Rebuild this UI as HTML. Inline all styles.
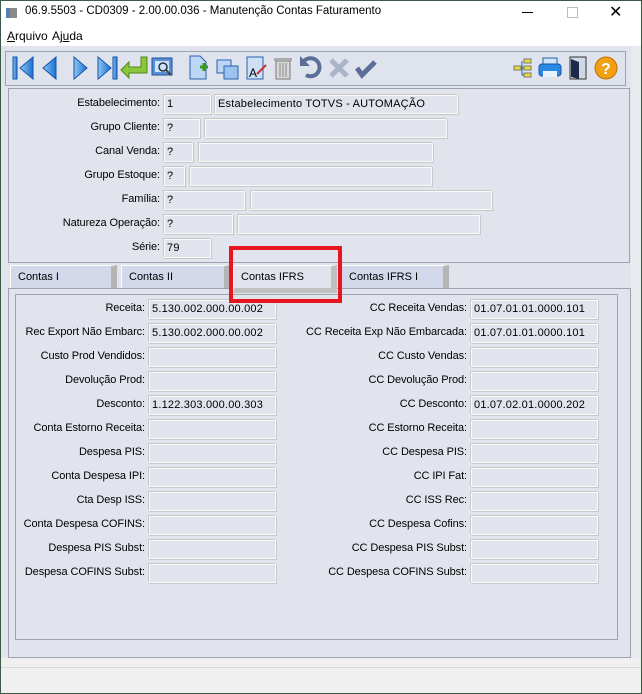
<!DOCTYPE html>
<html><head><meta charset="utf-8"><style>
*{margin:0;padding:0;box-sizing:border-box}
body{width:642px;height:694px;overflow:hidden;background:#f0f0f0;font-family:"Liberation Sans",sans-serif;font-size:11px;color:#000;position:relative}
.a{position:absolute}
.win{left:0;top:0;width:642px;height:694px;border:1px solid #3c5a48}
.lbl{position:absolute;text-align:right;white-space:nowrap;font-size:11px;letter-spacing:-0.1px}
.inp{position:absolute;height:20px;border:1px solid #c8c8c8;border-right-color:#fafafa;border-bottom-color:#fafafa;box-shadow:inset 1px 1px 0 #fafafa,1px 1px 0 #c8c8c8;background:#e1e4ec;padding:3px 3px;font-size:11px;white-space:nowrap;overflow:hidden;letter-spacing:0.2px}
.tab{position:absolute;top:265px;height:24px;background:#d3d9ea;border-top:1px solid #fff;border-left:1px solid #fff;border-right:6px solid #b5b5b5;padding:5px 7px;font-size:11px}
</style></head><body>
<div class="a win"></div>
<div class="a" style="left:1px;top:1px;width:640px;height:24px;background:#fff"></div>
<div class="a" style="left:6px;top:8px;width:11px;height:10px;background:#8a8a8a;border-left:4px solid #5a7fb0"></div>
<div class="a" style="left:25px;top:5px;font-size:11.5px">06.9.5503 - CD0309 - 2.00.00.036 - Manutenção Contas Faturamento</div>
<div class="a" style="left:522px;top:12px;width:11px;height:1px;background:#000"></div>
<div class="a" style="left:567px;top:7px;width:11px;height:11px;border:1px solid #bbb"></div>
<div class="a" style="left:609px;top:2px;font-size:16px">✕</div>
<div class="a" style="left:1px;top:25px;width:640px;height:21px;background:#fff"></div>
<div class="a" style="left:7px;top:29px;font-size:12px"><u>A</u>rquivo</div>
<div class="a" style="left:52px;top:29px;font-size:12px">Aj<u>u</u>da</div>
<div class="a" style="left:1px;top:46px;width:630px;height:612px;background:#e1e4ec"></div>
<div class="a" style="left:631px;top:46px;width:10px;height:612px;background:#e8eaf0"></div>
<div class="a" style="left:5px;top:51px;width:621px;height:35px;border:1px solid #9ba2b0;background:#dfe3ed"></div>
<svg class="a" style="left:0;top:52px" width="640" height="34">
<defs><linearGradient id="b" x1="0" x2="1"><stop offset="0" stop-color="#8ec8f6"/><stop offset="1" stop-color="#1a6fd0"/></linearGradient></defs>
<g fill="url(#b)" stroke="#1456a8" stroke-width="1">
<rect x="13" y="5" width="4" height="22"/><path d="M33 5 L20 16 L33 27Z"/>
<path d="M56 5 L43 16 L56 27Z"/>
<path d="M74 5 L87 16 L74 27Z"/>
<path d="M98 5 L111 16 L98 27Z"/><rect x="113" y="5" width="4" height="22"/>
</g>
<path d="M141 5 h6 v16 h-18 v5 l-8 -8 l8 -8 v5 h12z" fill="#8cc63c" stroke="#4d8a1a"/>
<rect x="152" y="6" width="20" height="17" fill="#5a8fd6" stroke="#1d4f9a"/><rect x="155" y="9" width="14" height="11" fill="#cfe4fa"/><circle cx="163" cy="15" r="4" fill="none" stroke="#234" stroke-width="1.5"/><path d="M166 18l5 5" stroke="#444" stroke-width="2"/>
<path d="M190 4h10l6 6v17h-16z" fill="#bcd6f4" stroke="#2a60b0"/><path d="M200 15h8M204 11v8" stroke="#3a9a20" stroke-width="3"/>
<rect x="217" y="8" width="14" height="13" fill="#bcd6f4" stroke="#2a60b0"/><rect x="224" y="14" width="14" height="13" fill="#9cc2ee" stroke="#2a60b0"/>
<rect x="247" y="5" width="16" height="22" fill="#cde0f6" stroke="#2a60b0"/><text x="249" y="25" font-family="Liberation Sans" font-size="12" fill="#000">A</text><path d="M257 22l9-9" stroke="#d03030" stroke-width="2"/>
<rect x="276" y="9" width="14" height="18" fill="#d8d8d8" stroke="#777"/><rect x="274" y="6" width="18" height="3" fill="#aaa"/><path d="M280 11v14M283 11v14M286 11v14" stroke="#888"/>
<path d="M304 9 a9 9 0 1 1 2 14" fill="none" stroke="#5a6e98" stroke-width="4"/><path d="M300 4v10h10z" fill="#5a6e98"/>
<path d="M331 8l16 16M347 8l-16 16" stroke="#aab4c6" stroke-width="5"/>
<path d="M357 16l5 7 13-13" fill="none" stroke="#5a6e98" stroke-width="5"/>
<g fill="#e8e030" stroke="#777"><rect x="524" y="7" width="7" height="4"/><rect x="524" y="14" width="7" height="4"/><rect x="524" y="21" width="7" height="4"/><rect x="514" y="14" width="7" height="4"/></g>
<path d="M521 16h3M522 9v14h2" stroke="#2a60b0" fill="none"/>
<rect x="543" y="6" width="14" height="7" fill="#cfe4fa" stroke="#2a60b0"/><rect x="539" y="12" width="22" height="12" rx="3" fill="#2a88e0" stroke="#1456a8"/><rect x="543" y="19" width="14" height="6" fill="#e8f2fc"/>
<rect x="570" y="5" width="16" height="22" fill="#d0d8e4" stroke="#333"/><path d="M571 7l8 3v17l-8-2z" fill="#1a2a48"/>
<circle cx="606" cy="16" r="11" fill="#f0a010" stroke="#c07000"/><text x="601" y="22" font-family="Liberation Sans" font-weight="bold" font-size="16" fill="#fff">?</text>
</svg>
<div class="a" style="left:8px;top:88px;width:622px;height:175px;border:1px solid #9ba2b0"></div>
<div class="lbl" style="right:482px;top:97px">Estabelecimento:</div>
<div class="inp" style="left:163px;top:94px;width:48px">1</div>
<div class="inp" style="left:214px;top:94px;width:244px">Estabelecimento TOTVS - AUTOMAÇÃO</div>
<div class="lbl" style="right:482px;top:121px">Grupo Cliente:</div>
<div class="inp" style="left:163px;top:118px;width:37px">?</div>
<div class="inp" style="left:204px;top:118px;width:243px"></div>
<div class="lbl" style="right:482px;top:145px">Canal Venda:</div>
<div class="inp" style="left:163px;top:142px;width:30px">?</div>
<div class="inp" style="left:198px;top:142px;width:235px"></div>
<div class="lbl" style="right:482px;top:169px">Grupo Estoque:</div>
<div class="inp" style="left:163px;top:166px;width:22px">?</div>
<div class="inp" style="left:189px;top:166px;width:243px"></div>
<div class="lbl" style="right:482px;top:193px">Família:</div>
<div class="inp" style="left:163px;top:190px;width:82px">?</div>
<div class="inp" style="left:250px;top:190px;width:242px"></div>
<div class="lbl" style="right:482px;top:217px">Natureza Operação:</div>
<div class="inp" style="left:163px;top:214px;width:70px">?</div>
<div class="inp" style="left:237px;top:214px;width:243px"></div>
<div class="lbl" style="right:482px;top:241px">Série:</div>
<div class="inp" style="left:163px;top:238px;width:48px">79</div>
<div class="tab" style="left:10px;width:107px">Contas I</div>
<div class="tab" style="left:121px;width:109px">Contas II</div>
<div class="tab" style="left:233px;width:104px;height:28px;background:#e1e4ec;border-right-color:#c0c0c0;border-bottom:5px solid #c0c0c0;padding-top:5px">Contas IFRS</div>
<div class="tab" style="left:341px;width:108px">Contas IFRS I</div>
<div class="a" style="left:8px;top:288px;width:623px;height:370px;border:1px solid #9ba2b0;border-top:none"></div>
<div class="a" style="left:8px;top:288px;width:225px;height:1px;background:#9ba2b0"></div>
<div class="a" style="left:337px;top:288px;width:294px;height:1px;background:#9ba2b0"></div>
<div class="a" style="left:15px;top:294px;width:603px;height:346px;border:1px solid #9ba2b0"></div>

<div class="lbl" style="right:497px;top:302px">Receita:</div><div class="inp" style="left:148px;top:299px;width:128px">5.130.002.000.00.002</div>
<div class="lbl" style="right:497px;top:326px">Rec Export Não Embarc:</div><div class="inp" style="left:148px;top:323px;width:128px">5.130.002.000.00.002</div>
<div class="lbl" style="right:497px;top:350px">Custo Prod Vendidos:</div><div class="inp" style="left:148px;top:347px;width:128px"></div>
<div class="lbl" style="right:497px;top:374px">Devolução Prod:</div><div class="inp" style="left:148px;top:371px;width:128px"></div>
<div class="lbl" style="right:497px;top:398px">Desconto:</div><div class="inp" style="left:148px;top:395px;width:128px">1.122.303.000.00.303</div>
<div class="lbl" style="right:497px;top:422px">Conta Estorno Receita:</div><div class="inp" style="left:148px;top:419px;width:128px"></div>
<div class="lbl" style="right:497px;top:446px">Despesa PIS:</div><div class="inp" style="left:148px;top:443px;width:128px"></div>
<div class="lbl" style="right:497px;top:470px">Conta Despesa IPI:</div><div class="inp" style="left:148px;top:467px;width:128px"></div>
<div class="lbl" style="right:497px;top:494px">Cta Desp ISS:</div><div class="inp" style="left:148px;top:491px;width:128px"></div>
<div class="lbl" style="right:497px;top:518px">Conta Despesa COFINS:</div><div class="inp" style="left:148px;top:515px;width:128px"></div>
<div class="lbl" style="right:497px;top:542px">Despesa PIS Subst:</div><div class="inp" style="left:148px;top:539px;width:128px"></div>
<div class="lbl" style="right:497px;top:566px">Despesa COFINS Subst:</div><div class="inp" style="left:148px;top:563px;width:128px"></div>

<div class="lbl" style="right:175px;top:302px">CC Receita Vendas:</div><div class="inp" style="left:470px;top:299px;width:128px">01.07.01.01.0000.101</div>
<div class="lbl" style="right:175px;top:326px">CC Receita Exp Não Embarcada:</div><div class="inp" style="left:470px;top:323px;width:128px">01.07.01.01.0000.101</div>
<div class="lbl" style="right:175px;top:350px">CC Custo Vendas:</div><div class="inp" style="left:470px;top:347px;width:128px"></div>
<div class="lbl" style="right:175px;top:374px">CC Devolução Prod:</div><div class="inp" style="left:470px;top:371px;width:128px"></div>
<div class="lbl" style="right:175px;top:398px">CC Desconto:</div><div class="inp" style="left:470px;top:395px;width:128px">01.07.02.01.0000.202</div>
<div class="lbl" style="right:175px;top:422px">CC Estorno Receita:</div><div class="inp" style="left:470px;top:419px;width:128px"></div>
<div class="lbl" style="right:175px;top:446px">CC Despesa PIS:</div><div class="inp" style="left:470px;top:443px;width:128px"></div>
<div class="lbl" style="right:175px;top:470px">CC IPI Fat:</div><div class="inp" style="left:470px;top:467px;width:128px"></div>
<div class="lbl" style="right:175px;top:494px">CC ISS Rec:</div><div class="inp" style="left:470px;top:491px;width:128px"></div>
<div class="lbl" style="right:175px;top:518px">CC Despesa Cofins:</div><div class="inp" style="left:470px;top:515px;width:128px"></div>
<div class="lbl" style="right:175px;top:542px">CC Despesa PIS Subst:</div><div class="inp" style="left:470px;top:539px;width:128px"></div>
<div class="lbl" style="right:175px;top:566px">CC Despesa COFINS Subst:</div><div class="inp" style="left:470px;top:563px;width:128px"></div>
<div class="a" style="left:1px;top:667px;width:640px;height:1px;background:#d8d8d8"></div>
<div class="a" style="left:229px;top:246px;width:113px;height:57px;border:4px solid #e8141e"></div>
</body></html>
